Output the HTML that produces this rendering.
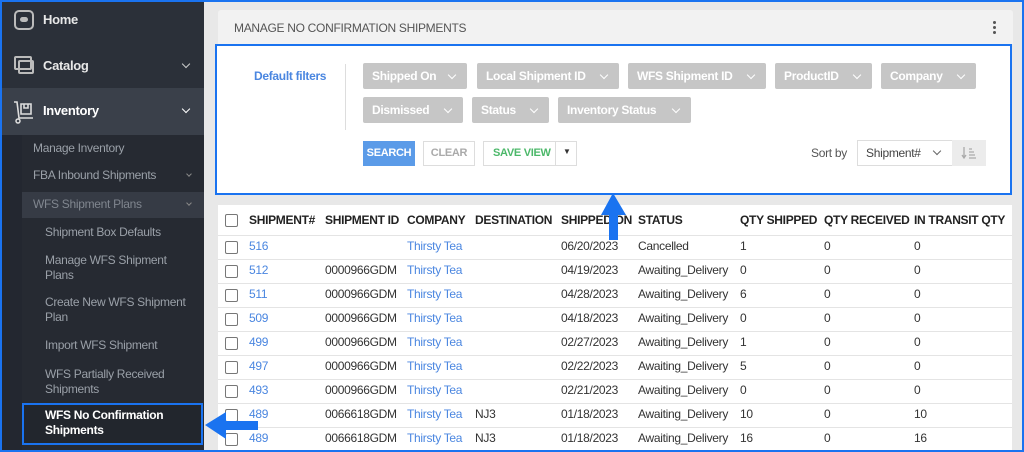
<!DOCTYPE html>
<html><head><meta charset="utf-8"><style>
*{margin:0;padding:0;box-sizing:border-box}
body{width:1024px;height:452px;overflow:hidden;position:relative;background:#e8e8e8;font-family:"Liberation Sans",sans-serif;font-size:12px;letter-spacing:-0.3px}
.a{position:absolute;white-space:nowrap}
#sb{position:absolute;left:0;top:0;width:204px;height:452px;background:#2b3039}
.chip{position:absolute;height:26px;background:#c6c6c6;color:#fff;font-weight:bold;line-height:26px;padding-left:9px;border-radius:2px}
.chip i{position:absolute;right:12px;top:9px;width:6px;height:6px;border-right:1.3px solid #fff;border-bottom:1.3px solid #fff;transform:rotate(45deg)}
.chv{position:absolute;width:6px;height:6px;border-right:1.5px solid #ccc;border-bottom:1.5px solid #ccc;transform:rotate(45deg)}
.sub{color:#9aa0a8;font-size:12px}
.hd{font-weight:bold;color:#222}
.row{position:absolute;left:218px;width:794px;height:24px;background:#fff;border-top:1px solid #e4e4e4}
.row span{position:absolute;top:3px}
.cb{position:absolute;left:7px;top:5px;width:13px;height:13px;border:1.5px solid #777;border-radius:2px;background:#fff}
.lk{color:#4a86e0}
</style></head><body>
<div id="sb">
 <div class="a" style="left:0;top:88px;width:204px;height:47px;background:#3a404a"></div>
 <div class="a" style="left:0;top:135px;width:22px;height:317px;background:#232730"></div>
 <div class="a" style="left:22px;top:135px;width:182px;height:317px;background:#262a32"></div>
 <div class="a" style="left:22px;top:192px;width:182px;height:26px;background:#363b45"></div>
 <div class="a" style="left:14px;top:10px;width:20px;height:20px;border:2px solid #bbb;border-radius:5px"></div>
 <div class="a" style="left:20px;top:17px;width:8px;height:5px;background:#bbb;border-radius:3px"></div>
 <div class="a" style="left:43px;top:12px;color:#e8e8e8;font-weight:bold;font-size:13px">Home</div>
 <div class="a" style="left:14px;top:56px;width:18px;height:14px;border:2px solid #bbb;border-radius:2px"></div>
 <div class="a" style="left:18px;top:60px;width:16px;height:14px;border:2px solid #bbb;border-radius:2px"></div>
 <div class="a" style="left:43px;top:58px;color:#e8e8e8;font-weight:bold;font-size:13px">Catalog</div>
 <div class="chv" style="left:183px;top:61px"></div>
 <svg class="a" style="left:12px;top:100px" width="24" height="24"><path d="M2 2h3l2 16h14M9 4h10v10H9zM12 4v4h4V4" fill="none" stroke="#ddd" stroke-width="1.6"/><circle cx="6" cy="21" r="2" fill="none" stroke="#ddd" stroke-width="1.5"/></svg>
 <div class="a" style="left:43px;top:103px;color:#fff;font-weight:bold;font-size:13px">Inventory</div>
 <div class="chv" style="left:183px;top:106px;border-color:#fff"></div>
 <div class="a sub" style="left:33px;top:141px">Manage Inventory</div>
 <div class="a sub" style="left:33px;top:168px">FBA Inbound Shipments</div>
 <div class="chv" style="left:187px;top:172px;width:4px;height:4px;border-color:#888;border-width:1px"></div>
 <div class="a sub" style="left:33px;top:197px;color:#80868f">WFS Shipment Plans</div>
 <div class="chv" style="left:187px;top:201px;width:4px;height:4px;border-color:#888;border-width:1px"></div>
 <div class="a sub" style="left:45px;top:225px">Shipment Box Defaults</div>
 <div class="a sub" style="left:45px;top:253px;line-height:15px">Manage WFS Shipment<br>Plans</div>
 <div class="a sub" style="left:45px;top:295px;line-height:15px">Create New WFS Shipment<br>Plan</div>
 <div class="a sub" style="left:45px;top:338px">Import WFS Shipment</div>
 <div class="a sub" style="left:45px;top:367px;line-height:15px">WFS Partially Received<br>Shipments</div>
 <div class="a" style="left:22px;top:403px;width:181px;height:42px;border:2px solid #1a73f0;background:#22262d"></div>
 <div class="a" style="left:45px;top:408px;line-height:15px;color:#fff;font-weight:bold">WFS No Confirmation<br>Shipments</div>
</div>
<div class="a" style="left:218px;top:10px;width:795px;height:34px;background:#f2f2f2;border-radius:3px 3px 0 0"></div>
<div class="a" style="left:234px;top:21px;color:#555;font-size:12px">MANAGE NO CONFIRMATION SHIPMENTS</div>
<div class="a" style="left:993px;top:21px;width:3px;height:3px;background:#555;border-radius:2px;box-shadow:0 5px 0 #555,0 10px 0 #555"></div>
<div class="a" style="left:215px;top:44px;width:797px;height:151px;background:#fff;border:2px solid #1a73f0"></div>
<div class="a" style="left:254px;top:69px;color:#4a86e0;font-weight:bold">Default filters</div>
<div class="a" style="left:345px;top:64px;width:1px;height:66px;background:#ddd"></div>
<div class="chip" style="left:363px;top:63px;width:104px">Shipped On<i></i></div>
<div class="chip" style="left:477px;top:63px;width:142px">Local Shipment ID<i></i></div>
<div class="chip" style="left:628px;top:63px;width:138px">WFS Shipment ID<i></i></div>
<div class="chip" style="left:775px;top:63px;width:97px">ProductID<i></i></div>
<div class="chip" style="left:881px;top:63px;width:95px">Company<i></i></div>
<div class="chip" style="left:363px;top:97px;width:100px">Dismissed<i></i></div>
<div class="chip" style="left:472px;top:97px;width:77px">Status<i></i></div>
<div class="chip" style="left:558px;top:97px;width:133px">Inventory Status<i></i></div>
<div class="a" style="left:363px;top:141px;width:52px;height:25px;background:#5b9be8;color:#fff;font-weight:bold;font-size:11px;text-align:center;line-height:25px">SEARCH</div>
<div class="a" style="left:423px;top:141px;width:52px;height:25px;border:1px solid #ddd;color:#aaa;font-weight:bold;font-size:11px;text-align:center;line-height:23px">CLEAR</div>
<div class="a" style="left:483px;top:141px;width:94px;height:25px;border:1px solid #ddd;color:#4cb86a;font-weight:bold;font-size:11px;line-height:23px;padding-left:9px">SAVE VIEW</div>
<div class="a" style="left:555px;top:141px;width:1px;height:25px;background:#ddd"></div>
<div class="a" style="left:563px;top:147px;font-size:8px;color:#333">&#9660;</div>
<div class="a" style="left:811px;top:146px;color:#555">Sort by</div>
<div class="a" style="left:857px;top:140px;width:129px;height:26px;border:1px solid #ddd"></div>
<div class="a" style="left:952px;top:140px;width:34px;height:26px;background:#ececec"></div>
<div class="a" style="left:866px;top:146px;color:#444">Shipment#</div>
<div class="chv" style="left:934px;top:148px;border-color:#666;border-width:1px"></div>
<svg class="a" style="left:961px;top:145px" width="16" height="16"><path d="M3 2v11M1 10l2 3 2-3M8 4h3M8 7h5M8 10h6M8 13h7" stroke="#aaa" stroke-width="1.3" fill="none"/></svg>
<div class="row" style="top:205px;height:30px;border:none"><div class="cb" style="top:9px"></div>
<span class="hd" style="left:31px;top:8px">SHIPMENT#</span><span class="hd" style="left:107px;top:8px">SHIPMENT ID</span><span class="hd" style="left:189px;top:8px">COMPANY</span><span class="hd" style="left:257px;top:8px">DESTINATION</span><span class="hd" style="left:343px;top:8px">SHIPPED ON</span><span class="hd" style="left:420px;top:8px">STATUS</span><span class="hd" style="left:522px;top:8px">QTY SHIPPED</span><span class="hd" style="left:606px;top:8px">QTY RECEIVED</span><span class="hd" style="left:696px;top:8px">IN TRANSIT QTY</span></div>
<div id="rows"></div>
<script>
const d=[["516","","","06/20/2023","Cancelled","1","0"],["512","0000966GDM","","04/19/2023","Awaiting_Delivery","0","0"],["511","0000966GDM","","04/28/2023","Awaiting_Delivery","6","0"],["509","0000966GDM","","04/18/2023","Awaiting_Delivery","0","0"],["499","0000966GDM","","02/27/2023","Awaiting_Delivery","1","0"],["497","0000966GDM","","02/22/2023","Awaiting_Delivery","5","0"],["493","0000966GDM","","02/21/2023","Awaiting_Delivery","0","0"],["489","0066618GDM","NJ3","01/18/2023","Awaiting_Delivery","10","10"],["489","0066618GDM","NJ3","01/18/2023","Awaiting_Delivery","16","16"]];
let h="";d.forEach((r,i)=>{h+=`<div class="row" style="top:${235+i*24}px"><div class="cb"></div><span class="lk" style="left:31px">${r[0]}</span><span style="left:107px;color:#333">${r[1]}</span><span class="lk" style="left:189px">Thirsty Tea</span><span style="left:257px;color:#333">${r[2]}</span><span style="left:343px;color:#333">${r[3]}</span><span style="left:420px;color:#333">${r[4]}</span><span style="left:522px;color:#333">${r[5]}</span><span style="left:606px;color:#333">0</span><span style="left:696px;color:#333">${r[6]}</span></div>`});
document.getElementById("rows").outerHTML=h;
</script>
<svg class="a" style="left:0;top:0" width="1024" height="452"><path d="M613 193L626 215H618V240H609V215H601Z" fill="#1a73f0"/><path d="M205 425L226 412V421H258V430H226V439Z" fill="#1a73f0"/></svg>
<div class="a" style="left:0;top:0;width:1024px;height:452px;border:2px solid #1a73f0"></div>
</body></html>
